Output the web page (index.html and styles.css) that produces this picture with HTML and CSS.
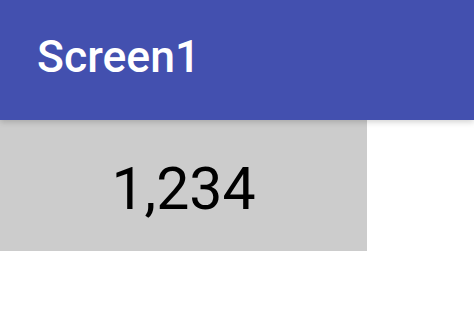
FILE: index.html
```html
<!DOCTYPE html>
<html>
<head>
<meta charset="utf-8">
<link rel="stylesheet" href="styles.css">
</head>
<body>
<header class="appbar"><h1 class="title">Screen1</h1></header>
<main class="content">
  <div class="counter">1,234</div>
</main>
</body>
</html>
```
FILE: styles.css
```css
html, body {
  margin: 0;
  padding: 0;
  background: #ffffff;
  font-family: Roboto, "Noto Sans", sans-serif;
}
.appbar {
  position: relative;
  z-index: 1;
  box-sizing: border-box;
  height: 120px;
  background: #4350af;
  display: flex;
  align-items: center;
  padding-left: 37px;
  padding-bottom: 6px;
  box-shadow: 0 2px 6px rgba(0, 0, 0, 0.18);
}
.title {
  margin: 0;
  color: #ffffff;
  font-size: 44.5px;
  font-weight: 500;
  line-height: 1;
}
.content {
  display: flex;
}
.counter {
  box-sizing: border-box;
  width: 367px;
  height: 131px;
  padding-top: 6px;
  background: #cccccc;
  color: #000000;
  font-size: 59px;
  display: flex;
  align-items: center;
  justify-content: center;
}
```
